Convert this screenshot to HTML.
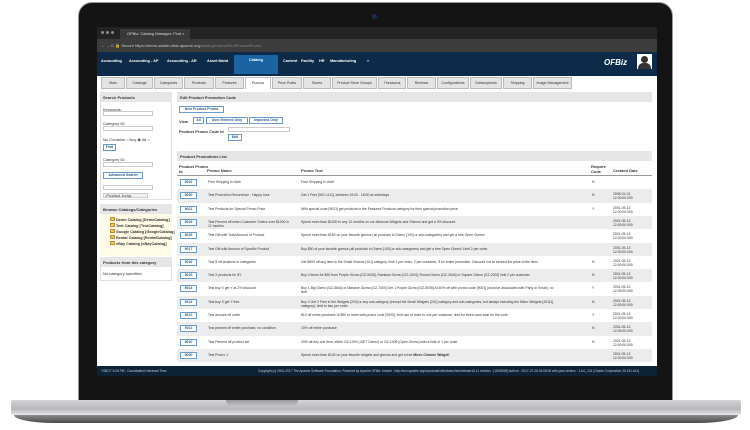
<!DOCTYPE html>
<html><head><meta charset="utf-8"><style>
*{margin:0;padding:0;box-sizing:border-box}
body{width:750px;height:430px;background:#fff;position:relative;overflow:hidden;font-family:"Liberation Sans",sans-serif;color:#333}
.a{position:absolute}
.t{font-size:4px;white-space:nowrap;position:absolute}
.b{font-weight:bold}
.n{position:absolute;top:59px;font-size:3.8px;font-weight:bold;color:#fff;white-space:nowrap}
.btn{position:absolute;border:1px solid #6a9ac8;background:#fff;color:#2a5b8d;font-size:3.5px;font-weight:bold;text-align:center;line-height:5px;height:7px}
.tab{position:absolute;top:77px;height:12px;background:#e4e4e4;border:1px solid #bbb;font-size:3.6px;text-align:center;line-height:10px;color:#333}
.row{position:absolute;left:177px;width:475px;height:13.3px}
.row.g{background:#ececec}
.inp{position:absolute;height:5px;border:1px solid #ccc;background:#fff}
.f{position:absolute;left:110px;width:5px;height:4px;background:#e8c56a;border:1px solid #b8923a}
</style></head><body>
<div class="a" style="left:78px;top:2px;width:595px;height:400px;background:#141414;border-radius:14px 14px 0 0;border:1px solid #999"></div>
<div class="a" style="left:372px;top:14px;width:5px;height:5px;border-radius:50%;background:#1d2c55"></div>
<div class="a" style="left:97px;top:27px;width:560px;height:12px;background:#232323"></div>
<div class="a" style="left:101px;top:31px;width:3px;height:3px;border-radius:50%;background:#888"></div>
<div class="a" style="left:106px;top:31px;width:3px;height:3px;border-radius:50%;background:#888"></div>
<div class="a" style="left:111px;top:31px;width:3px;height:3px;border-radius:50%;background:#888"></div>
<div class="a" style="left:120px;top:29px;width:70px;height:10px;background:#3a3a3a"></div>
<div class="t" style="left:127px;top:31px;color:#ddd">OFBiz: Catalog Manager: Find ×</div>
<div class="a" style="left:97px;top:39px;width:560px;height:13px;background:#3c3c3c"></div>
<div class="t" style="left:101px;top:43px;color:#ccc">←  →  C   🔒 Secure  https://demo-stable.ofbiz.apache.org<span style="color:#888">/catalog/control/FindProductPromo</span></div>
<div class="a" style="left:97px;top:52px;width:560px;height:22px;background:#0d2b48"></div>
<div class="a" style="left:234px;top:55px;width:44px;height:19px;background:#1a64a4"></div>
<div class="n" style="left:101px">Accounting</div>
<div class="n" style="left:129px">Accounting - AP</div>
<div class="n" style="left:167px">Accounting - AR</div>
<div class="n" style="left:207px">Asset Maint</div>
<div class="n" style="left:249px;top:58px">Catalog</div>
<div class="n" style="left:283px">Content</div>
<div class="n" style="left:301px">Facility</div>
<div class="n" style="left:319px">HR</div>
<div class="n" style="left:330px">Manufacturing</div>
<div class="n" style="left:367px">»</div>
<div class="t b" style="left:604px;top:58px;color:#fff;font-size:8px;font-style:italic">OFBiz</div>
<div class="a" style="left:637px;top:54px;width:15px;height:15px;background:#fff"><div class="a" style="left:4px;top:2px;width:7px;height:7px;border-radius:50%;background:#333"></div><div class="a" style="left:1px;top:9px;width:13px;height:6px;background:#333;border-radius:5px 5px 0 0"></div></div>
<div class="a" style="left:97px;top:74px;width:560px;height:16px;background:#fff;border-top:2px solid #0d2b48"></div>
<div class="tab" style="left:101px;width:24px">Main</div>
<div class="tab" style="left:126px;width:27px">Catalogs</div>
<div class="tab" style="left:154px;width:29px">Categories</div>
<div class="tab" style="left:184px;width:30px">Products</div>
<div class="tab" style="left:215px;width:29px">Features</div>
<div class="tab" style="left:245px;width:26px;background:#fff;border-bottom:none">Promos</div>
<div class="tab" style="left:272px;width:30px">Price Rules</div>
<div class="tab" style="left:303px;width:28px">Stores</div>
<div class="tab" style="left:332px;width:45px">Product Store Groups</div>
<div class="tab" style="left:378px;width:28px">Thesaurus</div>
<div class="tab" style="left:407px;width:29px">Reviews</div>
<div class="tab" style="left:437px;width:32px">Configurations</div>
<div class="tab" style="left:470px;width:32px">Subscriptions</div>
<div class="tab" style="left:503px;width:29px">Shipping</div>
<div class="tab" style="left:533px;width:39px">Image Management</div>
<div class="a" style="left:97px;top:90px;width:560px;height:276px;background:#fff"></div>
<div class="a" style="left:100px;top:92px;width:72px;height:108px;border:1px solid #e0e0e0"></div>
<div class="a" style="left:100px;top:92px;width:72px;height:10px;background:#e6e6e6"></div>
<div class="t b" style="left:103px;top:95px">Search Products</div>
<div class="t" style="left:103px;top:107px">Keywords:</div><div class="inp" style="left:103px;top:111px;width:50px"></div>
<div class="t" style="left:103px;top:121px">Category ID:</div><div class="inp" style="left:103px;top:126px;width:50px"></div>
<div class="t" style="left:103px;top:137px">No Contains ○ Any ◉ All ○</div>
<div class="btn" style="left:103px;top:144px;width:13px">Find</div>
<div class="t" style="left:103px;top:157px">Category ID:</div><div class="inp" style="left:103px;top:162px;width:50px"></div>
<div class="btn" style="left:103px;top:172px;width:40px">Advanced Search</div>
<div class="inp" style="left:103px;top:185px;width:50px"></div>
<div class="inp" style="left:103px;top:193px;width:45px;background:#f2f2f2"></div><div class="t" style="left:105px;top:193px">-Product Jump-</div>
<div class="a" style="left:100px;top:204px;width:72px;height:10px;background:#e6e6e6"></div>
<div class="t b" style="left:103px;top:207px">Browse Catalogs/Categories</div>
<div class="a" style="left:100px;top:214px;width:72px;height:42px;background:#fffbe6"></div>
<div class="f" style="top:217px"></div><div class="f" style="top:223px"></div><div class="f" style="top:229px"></div><div class="f" style="top:235px"></div><div class="f" style="top:241px"></div>
<div class="t b" style="left:116px;top:217px;line-height:6px;font-size:3.8px">Demo Catalog [DemoCatalog]<br>Test Catalog [TestCatalog]<br>Google Catalog [GoogleCatalog]<br>Rental Catalog [RentalCatalog]<br>eBay Catalog [eBayCatalog]</div>
<div class="a" style="left:100px;top:257px;width:72px;height:24px;border:1px solid #e0e0e0"></div>
<div class="a" style="left:100px;top:257px;width:72px;height:10px;background:#e6e6e6"></div>
<div class="t b" style="left:103px;top:260px">Products from this category</div>
<div class="t" style="left:103px;top:271px">No category specified.</div>
<div class="a" style="left:177px;top:92px;width:475px;height:10px;background:#e6e6e6"></div>
<div class="t b" style="left:180px;top:95px">Edit Product Promotion Code</div>
<div class="btn" style="left:179px;top:106px;width:45px">New Product Promo</div>
<div class="t b" style="left:179px;top:119px">View</div>
<div class="btn" style="left:193px;top:117px;width:11px">All</div>
<div class="btn" style="left:206px;top:117px;width:42px">User Entered Only</div>
<div class="btn" style="left:249px;top:117px;width:34px">Imported Only</div>
<div class="t b" style="left:179px;top:129px">Product Promo Code Id</div>
<div class="inp" style="left:228px;top:127px;width:62px"></div>
<div class="btn" style="left:228px;top:134px;width:14px">Edit</div>
<div class="a" style="left:177px;top:151px;width:475px;height:10px;background:#e6e6e6"></div>
<div class="t b" style="left:180px;top:154px">Product Promotions List</div>
<div class="t b" style="left:179px;top:165px;line-height:4.5px">Product Promo<br>Id</div>
<div class="t b" style="left:207px;top:168px">Promo Name</div>
<div class="t b" style="left:301px;top:168px">Promo Text</div>
<div class="t b" style="left:591px;top:165px;line-height:4.5px">Require<br>Code</div>
<div class="t b" style="left:613px;top:168px">Created Date</div>
<div class="a" style="left:177px;top:175px;width:475px;height:1px;background:#999"></div>
<div id="rows"></div>
<script>
var d=[["9022","Free Shipping in Utah","Free Shipping in Utah","N",""],
["9020","Test Promotion Recurrence - Happy hour","Get 1 Free [WG-1111], between 15:00 - 18:00 at weekdays","N","2008-01-01<br>12:00:00.000"],
["9021","Test Products for Special Promo Price","With special code [9021] get products in the Featured Products category for their special promotion price.","Y","2001-05-13<br>12:00:00.000"],
["9019","Test Percent off when Customer Orders over $1000 in<br>12 months","Spend more than $1000 in any 12 months on our fabulous Widgets and Gizmos and get a 3% discount.","","2001-05-13<br>12:00:00.000"],
["9018","Test Gift with Total Amount of Product","Spend more than $150 on your favorite gizmos (all products in Gizmo [100] or sub-categories) and get a free Open Gizmo!","","2001-05-13<br>12:00:00.000"],
["9017","Test Gift with Amount of Specific Product","Buy $50 of your favorite gizmos (all products in Gizmo [100] or sub-categories) and get a free Open Gizmo! Limit 2 per order.","","2001-05-13<br>12:00:00.000"],
["9016","Test $ off products in categories","Get $500 off any item in the Small Gizmos [101] category, limit 1 per order, 2 per customer, 3 for entire promotion. Discount not to exceed the price of the item.","N","2001-05-13<br>12:00:00.000"],
["9015","Test X products for $Y","Buy 4 items for $50 from Purple Gizmo [GZ-5005], Rainbow Gizmo [GZ-1004], Round Gizmo [GZ-2644] or Square Gizmo [GZ-2002] limit 2 per customer","N","2001-05-13<br>12:00:00.000"],
["9014","Test buy X get Y at Z% discount","Buy 1 Big Gizmo [GZ-8544] or Massive Gizmo [GZ-7000] Get 1 Purple Gizmo [GZ-5005] At 50% off with promo code [9001] (must be associated with Party or Email), no<br>limit","Y","2001-05-13<br>12:00:00.000"],
["9013","Test buy X get Y free","Buy 3 Get 2 Free in the Widgets [200] or any sub-category (except the Small Widgets [201] category and sub-categories, but always including the Micro Widgets [20111]<br>category), limit to two per order","N","2001-05-13<br>12:00:00.000"],
["9012","Test amount off order","$10 off entire purchase of $50 or more with promo code [9000], limit use of code to one per customer, limit for three uses total for the code","Y","2001-05-13<br>12:00:00.000"],
["9011","Test percent off entire purchase, no condition","10% off entire purchase","N","2001-05-13<br>12:00:00.000"],
["9010","Test Percent off product set","20% off any one item, either GZ-1000 (.NET Gizmo) or GZ-1006 (Open Gizmo) with a limit of 1 per order","N","2001-05-13<br>12:00:00.000"],
["9000","Test Promo 1","Spend more than $100 on your favorite widgets and gizmos and get a free <b>Micro Chrome Widget!</b>","","2001-05-13<br>12:00:00.000"]];
var h="";d.forEach(function(r,i){var y=176+i*13.3;
h+='<div class="row'+(i%2?' g':'')+'" style="top:'+y+'px"></div>';
h+='<div class="btn" style="left:180px;top:'+(y+3)+'px;width:17px">'+r[0]+'</div>';
h+='<div class="t" style="left:208px;top:'+(y+4)+'px;font-size:3.4px;line-height:4px">'+r[1]+'</div>';
h+='<div class="t" style="left:301px;top:'+(y+4)+'px;font-size:3.4px;line-height:4px">'+r[2]+'</div>';
h+='<div class="t" style="left:592px;top:'+(y+4)+'px;font-size:3.4px">'+r[3]+'</div>';
h+='<div class="t" style="left:613px;top:'+(y+3)+'px;font-size:3.4px;line-height:4px">'+r[4]+'</div>';});
document.getElementById('rows').innerHTML=h;
</script>
<div class="a" style="left:97px;top:366px;width:560px;height:10px;background:#0c2236"></div>
<div class="t" style="left:101px;top:369px;color:#ccc;font-size:3.2px">7/28/17 3:06 PM - Coordinated Universal Time</div>
<div class="t" style="left:258px;top:369px;color:#ccc;font-size:3.2px">Copyright (c) 2001-2017 The Apache Software Foundation. Powered by Apache OFBiz. branch : http://svn.apache.org/repos/asf/ofbiz/branches/release16.11 revision : [1803068] built on : 2017-07-28 03:08:09 with java version : 1.8.0_131 (Oracle Corporation 25.131-b11)</div>
<div class="a" style="left:11px;top:400px;width:730px;height:15px;background:linear-gradient(#d4d4d6,#b8b8bb 60%,#e8e8ea);border-radius:2px 2px 0 0"></div>
<div class="a" style="left:226px;top:400px;width:72px;height:7px;background:linear-gradient(#9a9a9c,#c8c8ca);border-radius:0 0 8px 8px"></div>
<div class="a" style="left:14px;top:415px;width:724px;height:8px;background:linear-gradient(#8a8a8d,#4a4a4d);border-radius:0 0 40px 40px/0 0 8px 8px"></div>
</body></html>
